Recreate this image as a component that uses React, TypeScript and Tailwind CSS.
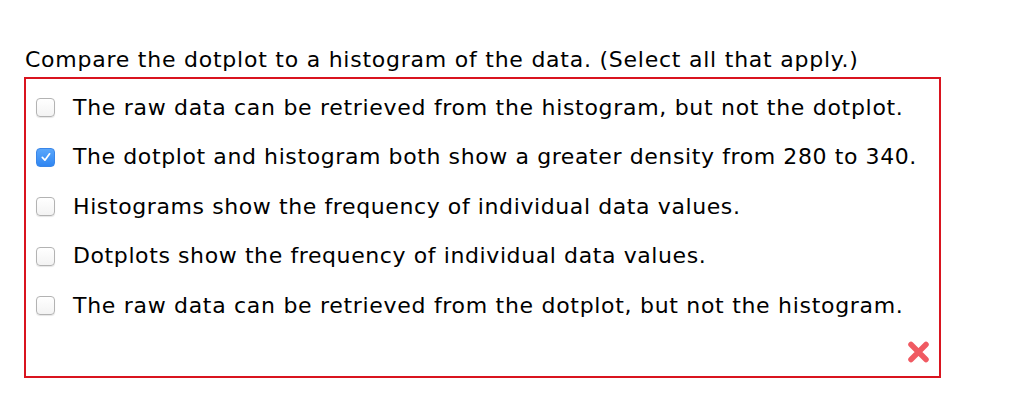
import React from "react";

const options = [
  { text: "The raw data can be retrieved from the histogram, but not the dotplot.", checked: false },
  { text: "The dotplot and histogram both show a greater density from 280 to 340.", checked: true },
  { text: "Histograms show the frequency of individual data values.", checked: false },
  { text: "Dotplots show the frequency of individual data values.", checked: false },
  { text: "The raw data can be retrieved from the dotplot, but not the histogram.", checked: false },
];

function Box({ checked }: { checked: boolean }) {
  if (checked) {
    return (
      <span className="flex h-[19px] w-[19px] shrink-0 items-center justify-center rounded-[4px] border border-[#3a86e8] bg-gradient-to-b from-[#5aa7fb] to-[#2f86f2]">
        <svg width="12" height="12" viewBox="0 0 12 12">
          <path d="M2.3 6.4 L4.9 9.2 L9.6 2.8" fill="none" stroke="white" strokeWidth="1.7" strokeLinecap="round" strokeLinejoin="round" />
        </svg>
      </span>
    );
  }
  return (
    <span className="block h-[19px] w-[19px] shrink-0 rounded-[4px] border border-[#b3b3b3] bg-gradient-to-b from-white to-[#f3f3f3] shadow-[0_1px_1px_rgba(0,0,0,0.1)]" />
  );
}

export default function App() {
  return (
    <div className="h-[412px] w-[1024px] bg-white pl-[24px] pt-[46px] text-black font-['DejaVu_Sans',Verdana,sans-serif] text-[22px] tracking-[0.6px]">
      <div className="pl-[1px] leading-[28px] whitespace-nowrap tracking-[0.76px]">Compare the dotplot to a histogram of the data. (Select all that apply.)</div>
      <div className="mt-[3px] flex h-[301px] w-[917px] flex-col border-2 border-[#d9141f] pl-[10px] pt-[4px]">
        {options.map((o, i) => (
          <div key={i} className="flex h-[49.5px] shrink-0 items-center gap-[18px] leading-[28px] whitespace-nowrap">
            <Box checked={o.checked} />
            <span className={i === 0 || i === 4 ? "tracking-[0.7px]" : ""}>{o.text}</span>
          </div>
        ))}
        <div className="mt-[9px] flex justify-end pr-[8px]">
          <svg width="25" height="24" viewBox="0 0 25 24">
            <path d="M5 4.5 L20 19.5 M20 4.5 L5 19.5" stroke="#f05a62" strokeWidth="5.5" strokeLinecap="round" />
          </svg>
        </div>
      </div>
    </div>
  );
}
